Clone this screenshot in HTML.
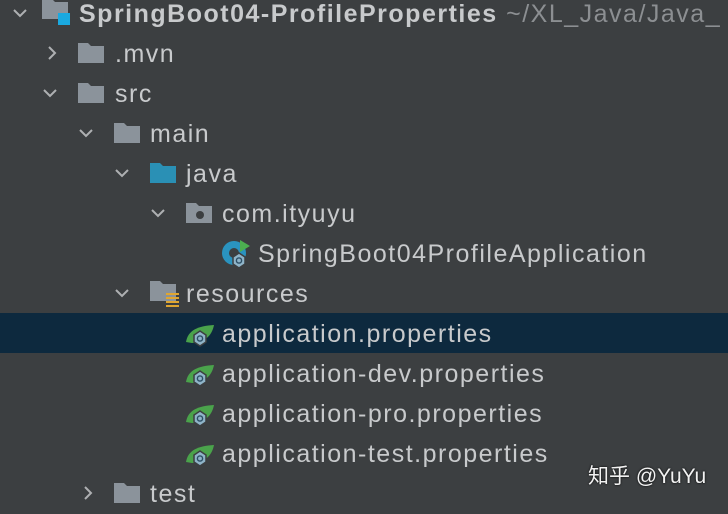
<!DOCTYPE html>
<html><head><meta charset="utf-8"><style>
body{margin:0;width:728px;height:506px;background:#3c3f41;overflow:hidden;position:relative;font-family:"Liberation Sans","Noto Sans CJK SC",sans-serif;}
.r{position:absolute;left:0;width:728px;height:40px;}
.t{position:absolute;top:1px;line-height:40px;font-size:25px;letter-spacing:1.5px;color:#c8cacc;white-space:nowrap;}
.a{position:absolute;top:12px;width:16px;height:16px;}
.i{position:absolute;top:10px;}
.sel{background:#0d293e;}
</style></head><body>
<svg width="0" height="0" style="position:absolute"><defs>
<symbol id="fold" viewBox="0 0 26 20"><path d="M0 0h10l3 3h13v17H0z" fill="#8b939b"/></symbol>
<symbol id="down" viewBox="0 0 16 16"><path d="M2 5l6 6 6-6" fill="none" stroke="#aeb0b2" stroke-width="2"/></symbol>
<symbol id="right" viewBox="0 0 16 16"><path d="M5 2l6 6-6 6" fill="none" stroke="#aeb0b2" stroke-width="2"/></symbol>
<symbol id="leaf" viewBox="0 0 34 24"><path d="M2 20C4 8 14 4 30 3c-2 10-8 17-22 18z" fill="#4aa34b"/><path d="M16 9l6 4v7l-6 4-6-4v-7z" fill="#8fb4c8" stroke="#3c3f41" stroke-width="1.5"/><circle cx="16" cy="16.5" r="2.6" fill="none" stroke="#2d4f66" stroke-width="1.4"/></symbol>
</defs></svg>

<div class="r" style="top:-7px"><svg class="a" style="left:12px"><use href="#down"/></svg><svg class="i" style="left:42px;top:6px" width="30" height="26"><use href="#fold" width="26" height="20"/><rect x="16" y="14" width="12" height="12" fill="#1aa9e0"/></svg><span class="t" style="left:79px;font-weight:bold">SpringBoot04-ProfileProperties <span style="font-weight:normal;color:#8c8f92">~/XL_Java/Java_</span></span></div>
<div class="r" style="top:33px"><svg class="a" style="left:44px"><use href="#right"/></svg><svg class="i" style="left:78px" width="26" height="20"><use href="#fold"/></svg><span class="t" style="left:115px">.mvn</span></div>
<div class="r" style="top:73px"><svg class="a" style="left:42px"><use href="#down"/></svg><svg class="i" style="left:78px" width="26" height="20"><use href="#fold"/></svg><span class="t" style="left:115px">src</span></div>
<div class="r" style="top:113px"><svg class="a" style="left:78px"><use href="#down"/></svg><svg class="i" style="left:114px" width="26" height="20"><use href="#fold"/></svg><span class="t" style="left:150px">main</span></div>
<div class="r" style="top:153px"><svg class="a" style="left:114px"><use href="#down"/></svg><svg class="i" style="left:150px" width="26" height="20"><path d="M0 0h10l3 3h13v17H0z" fill="#2a90b5"/></svg><span class="t" style="left:186px">java</span></div>
<div class="r" style="top:193px"><svg class="a" style="left:150px"><use href="#down"/></svg><svg class="i" style="left:186px" width="26" height="20"><use href="#fold"/><circle cx="14" cy="12" r="4" fill="#3c3f41"/></svg><span class="t" style="left:222px">com.ityuyu</span></div>
<div class="r" style="top:233px"><svg class="i" style="left:220px;top:5px" width="34" height="32"><circle cx="14" cy="15" r="12" fill="#2a93bf"/><circle cx="14" cy="15" r="5" fill="#3c3f41"/><path d="M20 2l10 6-10 6z" fill="#4caf50"/><path d="M19 15l6 4v7l-6 4-6-4v-7z" fill="#8fb4c8" stroke="#3c3f41" stroke-width="1.5"/><circle cx="19" cy="22.5" r="2.6" fill="none" stroke="#2d4f66" stroke-width="1.4"/></svg><span class="t" style="left:258px">SpringBoot04ProfileApplication</span></div>
<div class="r" style="top:273px"><svg class="a" style="left:114px"><use href="#down"/></svg><svg class="i" style="left:150px;top:8px" width="32" height="28"><use href="#fold" width="26" height="20"/><g fill="#e0a630"><rect x="16" y="12" width="13" height="2"/><rect x="16" y="16" width="13" height="2"/><rect x="16" y="20" width="13" height="2"/><rect x="16" y="24" width="13" height="2"/></g></svg><span class="t" style="left:186px">resources</span></div>
<div class="r sel" style="top:313px"><svg class="i" style="left:184px;top:8px" width="34" height="26"><use href="#leaf"/></svg><span class="t" style="left:222px">application.properties</span></div>
<div class="r" style="top:353px"><svg class="i" style="left:184px;top:8px" width="34" height="26"><use href="#leaf"/></svg><span class="t" style="left:222px">application-dev.properties</span></div>
<div class="r" style="top:393px"><svg class="i" style="left:184px;top:8px" width="34" height="26"><use href="#leaf"/></svg><span class="t" style="left:222px">application-pro.properties</span></div>
<div class="r" style="top:433px"><svg class="i" style="left:184px;top:8px" width="34" height="26"><use href="#leaf"/></svg><span class="t" style="left:222px">application-test.properties</span></div>
<div class="r" style="top:473px"><svg class="a" style="left:80px"><use href="#right"/></svg><svg class="i" style="left:114px" width="26" height="20"><use href="#fold"/></svg><span class="t" style="left:150px">test</span></div>
<div style="position:absolute;left:588px;top:460px;font-size:21px;color:#f2f2f2;text-shadow:0 0 2px #000;white-space:nowrap">知乎 @YuYu</div>
</body></html>
